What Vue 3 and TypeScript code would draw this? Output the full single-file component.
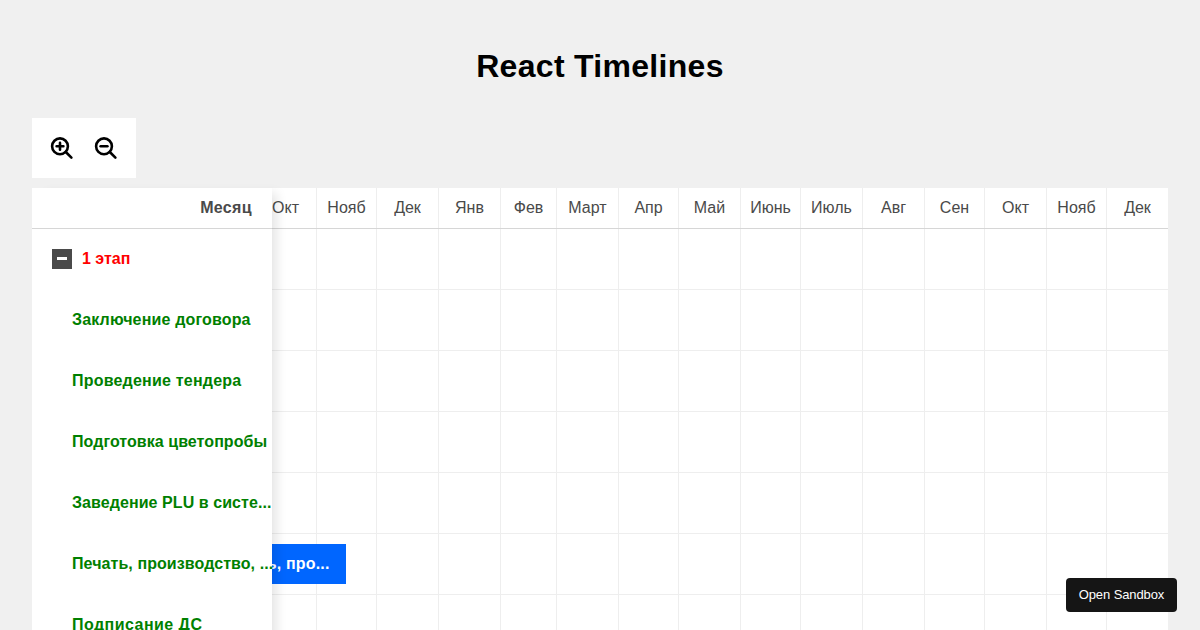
<script setup lang="ts">
const months: { name: string; width: number }[] = [
  ['Окт', 62], ['Нояб', 60], ['Дек', 62], ['Янв', 62], ['Фев', 56], ['Март', 62], ['Апр', 60], ['Май', 62],
  ['Июнь', 60], ['Июль', 62], ['Авг', 62], ['Сен', 60], ['Окт', 62], ['Нояб', 60], ['Дек', 62],
].map(([name, width]) => ({ name: name as string, width: width as number }))

const tasks: { name: string; spacing: number }[] = [
  { name: 'Заключение договора', spacing: 0.16 },
  { name: 'Проведение тендера', spacing: 0.21 },
  { name: 'Подготовка цветопробы', spacing: 0.06 },
  { name: 'Заведение PLU в систе...', spacing: 0.07 },
  { name: 'Печать, производство, ...', spacing: 0.08 },
  { name: 'Подписание ДС', spacing: 0.46 },
]
</script>

<template>
  <div class="page">
    <h1 class="title">React Timelines</h1>
    <div class="controls">
      <button class="zoom-btn" aria-label="Zoom in">
        <svg width="24" height="24" viewBox="0 0 24 24" fill="none" stroke="#000" stroke-width="2.6" stroke-linecap="round">
          <circle cx="10" cy="10.3" r="7.9" />
          <path d="M15.8 16l5.6 5.6" />
          <path d="M10 6.9v6.8M6.6 10.3h6.8" />
        </svg>
      </button>
      <button class="zoom-btn" aria-label="Zoom out">
        <svg width="24" height="24" viewBox="0 0 24 24" fill="none" stroke="#000" stroke-width="2.6" stroke-linecap="round">
          <circle cx="10" cy="10.3" r="7.9" />
          <path d="M15.8 16l5.6 5.6" />
          <path d="M6.6 10.3h6.8" />
        </svg>
      </button>
    </div>
    <div class="timeline">
      <aside class="sidebar">
        <div class="side-head">Месяц</div>
        <div class="side-row stage">
          <span class="toggle"><span class="minus"></span></span>
          <span>1 этап</span>
        </div>
        <div v-for="t in tasks" :key="t.name" class="side-row task">
          <span :style="{ letterSpacing: t.spacing + 'px' }">{{ t.name }}</span>
        </div>
      </aside>
      <div class="chart">
        <div class="track">
          <div class="head-row">
            <div v-for="(m, i) in months" :key="i" class="head-cell" :style="{ width: m.width + 'px' }">{{ m.name }}</div>
          </div>
          <div v-for="r in 7" :key="r" class="grid-row">
            <div v-for="(m, i) in months" :key="i" class="grid-cell" :style="{ width: m.width + 'px' }"></div>
            <div v-if="r === 6" class="bar">Печать, про...</div>
          </div>
        </div>
      </div>
    </div>
    <a class="sandbox">Open Sandbox</a>
  </div>
</template>

<style>
html, body { margin: 0; overflow: hidden; background: #f0f0f0; }
</style>

<style scoped>
.page {
  height: 630px;
  overflow: hidden;
  box-sizing: border-box;
  padding: 0 32px;
  font-family: "Liberation Sans", Arial, sans-serif;
  background: #f0f0f0;
}
.title {
  margin: 0;
  padding-top: 48px;
  height: 70px;
  line-height: 37px;
  font-size: 32px;
  font-weight: 700;
  letter-spacing: 0.3px;
  text-align: center;
  color: #000;
}
.controls {
  display: inline-flex;
  vertical-align: top;
  background: #fff;
  height: 60px;
  padding: 0 8px;
  align-items: center;
  margin-bottom: 10px;
}
.zoom-btn {
  width: 44px;
  height: 44px;
  padding: 0;
  border: 0;
  background: none;
  display: flex;
  align-items: center;
  justify-content: center;
}
.timeline {
  display: flex;
  background: #fff;
  width: 1136px;
}
.sidebar {
  flex: none;
  width: 240px;
  background: #fff;
  position: relative;
  z-index: 2;
  box-shadow: 10px 0 10px -5px rgba(12, 12, 12, 0.1);
}
.side-head {
  height: 41px;
  box-sizing: border-box;
  border-bottom: 1px solid #d6d6d6;
  padding-right: 20px;
  text-align: right;
  line-height: 39px;
  font-size: 16px;
  font-weight: 700;
  letter-spacing: 0.35px;
  color: #4a4a4a;
}
.side-row {
  height: 61px;
  box-sizing: border-box;
  padding-bottom: 2px;
  display: flex;
  align-items: center;
  font-size: 16px;
  font-weight: 700;
  white-space: nowrap;
}
.stage {
  color: #f00;
  padding-left: 20px;
  gap: 10px;
}
.task {
  color: #008000;
  padding-left: 40px;
}
.toggle {
  width: 20px;
  height: 20px;
  background: #4a4a4a;
  display: flex;
  align-items: center;
  justify-content: center;
}
.minus {
  width: 10px;
  height: 3px;
  background: #fff;
}
.chart {
  flex: 1;
  min-width: 0;
  overflow: hidden;
}
.track {
  margin-left: -17px;
  width: 914px;
}
.head-row {
  display: flex;
  height: 41px;
  box-sizing: border-box;
  border-bottom: 1px solid #d6d6d6;
}
.head-cell {
  flex: none;
  box-sizing: border-box;
  border-right: 1px solid #eee;
  text-align: center;
  line-height: 39px;
  font-size: 16px;
  color: #4a4a4a;
}
.grid-row {
  display: flex;
  height: 61px;
  box-sizing: border-box;
  border-bottom: 1px solid #eee;
  position: relative;
}
.grid-cell {
  flex: none;
  box-sizing: border-box;
  border-right: 1px solid #eee;
}
.bar {
  position: absolute;
  top: 10px;
  left: -51px;
  width: 142px;
  height: 40px;
  box-sizing: border-box;
  padding: 0 16px;
  background: #0066ff;
  color: #fff;
  font-size: 16px;
  font-weight: 700;
  letter-spacing: 0.16px;
  line-height: 40px;
  white-space: nowrap;
  overflow: hidden;
}
.sandbox {
  position: fixed;
  left: 1066px;
  top: 578px;
  width: 111px;
  height: 34px;
  box-sizing: border-box;
  background: #151515;
  color: #fff;
  border-radius: 4px;
  text-align: center;
  line-height: 34px;
  font-size: 13px;
  letter-spacing: -0.1px;
  z-index: 5;
}
</style>
